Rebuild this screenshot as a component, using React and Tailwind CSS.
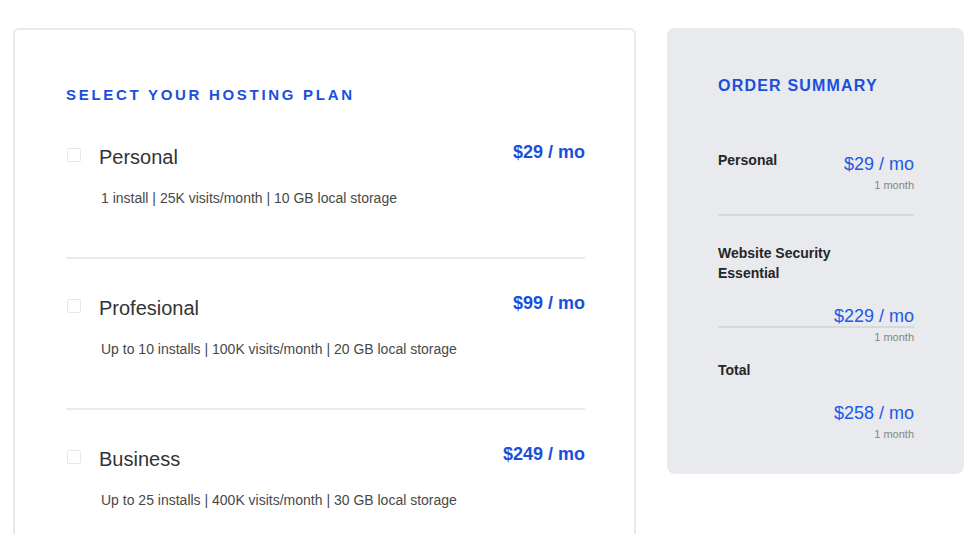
const plans = [
  { name: 'Personal', price: '$29 / mo', desc: '1 install | 25K visits/month | 10 GB local storage' },
  { name: 'Profesional', price: '$99 / mo', desc: 'Up to 10 installs | 100K visits/month | 20 GB local storage' },
  { name: 'Business', price: '$249 / mo', desc: 'Up to 25 installs | 400K visits/month | 30 GB local storage' },
]

function PlanRow({ plan, first }) {
  return (
    <div className={`${first ? 'pt-[37px]' : 'pt-[33px]'} pb-[51px] border-b-2 border-[#e9eaee]`}>
      <div className="flex items-start justify-between">
        <div className="flex items-start">
          <span className="mt-[7px] ml-[1px] w-[14px] h-[14px] border border-[#e6e7ea] rounded-[2px] bg-white" />
          <span className="ml-[18px] mt-[4px] text-[20px] leading-[24px] text-[#333]">{plan.name}</span>
        </div>
        <span className="text-[18px] leading-[22px] font-bold text-[#1a4fdc]">{plan.price}</span>
      </div>
      <p className="mt-[21px] pl-[35px] text-[14px] leading-[16px] text-[#484848]">{plan.desc}</p>
    </div>
  )
}

export default function App() {
  return (
    <div className="flex items-start gap-[31px] pt-[28px] pl-[13px] bg-white min-h-screen" style={{ fontFamily: '"Liberation Sans", Arial, sans-serif' }}>
      <div className="w-[623px] border-2 border-[#e8e9ed] rounded-md bg-white pt-[56px] pl-[51px] pr-[49px]">
        <h2 className="text-[15px] leading-[18px] font-bold tracking-[2.7px] text-[#1a4fdc]">SELECT YOUR HOSTING PLAN</h2>
        {plans.map((p, i) => (
          <PlanRow key={p.name} plan={p} first={i === 0} />
        ))}
      </div>

      <div className="w-[297px] rounded-lg bg-[#e8eaee] pt-[48px] pb-[33px] pl-[51px] pr-[50px]">
        <h2 className="text-[16px] leading-[19px] font-bold tracking-[1.2px] text-[#1a4fdc]">ORDER SUMMARY</h2>

        <div className="mt-[57px] flex items-start justify-between">
          <span className="text-[14px] leading-[16px] font-bold text-[#262626]">Personal</span>
          <span className="mt-[1px] text-[18px] leading-[22px] text-[#2058e8]">$29 / mo</span>
        </div>
        <p className="mt-[4px] text-right text-[11px] leading-[13px] text-[#858585]">1 month</p>
        <div className="mt-[22px] h-[2px] bg-[#d6d8dd]" />

        <p className="mt-[27px] w-[150px] text-[14px] leading-[20px] font-bold text-[#262626]">Website Security Essential</p>
        <p className="mt-[23px] text-right text-[18px] leading-[20px] text-[#2058e8]">$229 / mo</p>
        <div className="h-[2px] bg-[#d6d8dd]" />
        <p className="mt-[3px] text-right text-[11px] leading-[13px] text-[#858585]">1 month</p>

        <p className="mt-[18px] text-[14px] leading-[16px] font-bold text-[#262626]">Total</p>
        <p className="mt-[24px] text-right text-[18px] leading-[22px] text-[#2058e8]">$258 / mo</p>
        <p className="mt-[4px] text-right text-[11px] leading-[13px] text-[#858585]">1 month</p>
      </div>
    </div>
  )
}
